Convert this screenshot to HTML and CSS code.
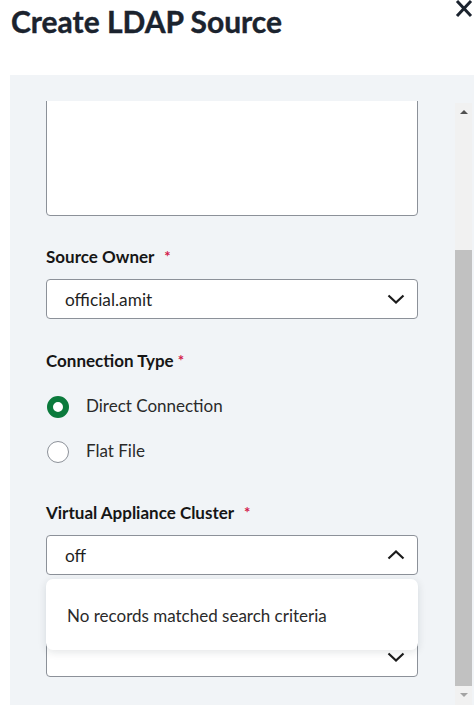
FILE: index.html
```html
<!DOCTYPE html>
<html lang="en">
<head>
<meta charset="utf-8">
<title>Create LDAP Source</title>
<link rel="stylesheet" href="styles.css">
</head>
<body>
<div class="page">
  <header class="head">
    <h1 class="title">Create LDAP Source</h1>
    <button class="close" aria-label="Close">
      <svg viewBox="0 0 18 18" width="18" height="18"><path d="M2 1 L16 16 M16 1 L2 16" stroke="#1b232e" stroke-width="3" stroke-linecap="butt" fill="none"/></svg>
    </button>
  </header>
  <div class="panel">
    <div class="scroll">
      <div class="content">
        <div class="textarea"></div>

        <div class="field field-first">
          <div class="label">Source Owner <span class="req req-gap">*</span></div>
          <div class="select">
            <span class="value">official.amit</span>
            <svg class="chev" viewBox="0 0 18 10" width="18" height="10"><path d="M1.5 1.5 L9 8.5 L16.5 1.5" stroke="#1b1b1b" stroke-width="2.2" fill="none"/></svg>
          </div>
        </div>

        <div class="field">
          <div class="label">Connection Type<span class="req">*</span></div>
          <div class="radios">
            <div class="radio-row"><span class="radio radio-on"></span><span class="radio-text">Direct Connection</span></div>
            <div class="radio-row"><span class="radio"></span><span class="radio-text">Flat File</span></div>
          </div>
        </div>

        <div class="field field-open">
          <div class="label">Virtual Appliance Cluster <span class="req req-gap">*</span></div>
          <div class="select">
            <span class="value">off</span>
            <svg class="chev" viewBox="0 0 18 10" width="18" height="10"><path d="M1.5 8.5 L9 1.5 L16.5 8.5" stroke="#1b1b1b" stroke-width="2.2" fill="none"/></svg>
          </div>
          <div class="popup">No records matched search criteria</div>
        </div>

        <div class="field field-last">
          <div class="select">
            <span class="value"></span>
            <svg class="chev" viewBox="0 0 18 10" width="18" height="10"><path d="M1.5 1.5 L9 8.5 L16.5 1.5" stroke="#1b1b1b" stroke-width="2.2" fill="none"/></svg>
          </div>
        </div>
      </div>
      <div class="scrollbar">
        <div class="sb-btn"><span class="tri tri-up"></span></div>
        <div class="sb-space"></div>
        <div class="sb-thumb"></div>
        <div class="sb-btn"><span class="tri tri-down"></span></div>
      </div>
    </div>
  </div>
</div>
</body>
</html>
```

FILE: styles.css
```css
html, body {
  margin: 0;
  padding: 0;
  background: #ffffff;
  overflow: hidden;
}
body {
  font-family: "Lato", "Liberation Sans", sans-serif;
  color: #1f1f1f;
}
.page {
  width: 474px;
  height: 707px;
  overflow: hidden;
}
.head {
  height: 75px;
  display: flex;
  justify-content: space-between;
  align-items: flex-start;
  padding-left: 11px;
  box-sizing: border-box;
}
.title {
  margin: 0;
  font-size: 30px;
  line-height: 42px;
  font-weight: 700;
  color: #1b232e;
  letter-spacing: 0;
  -webkit-text-stroke: 0.4px #1b232e;
}
.close {
  border: 0;
  background: transparent;
  padding: 0;
  margin: 0 1px 0 0;
  width: 18px;
  height: 18px;
  display: flex;
}
.panel {
  margin-left: 10px;
  width: 464px;
  height: 630px;
  background: #f1f4f7;
  padding-top: 26px;
  box-sizing: border-box;
}
.scroll {
  display: flex;
  height: 604px;
}
.content {
  flex: 1;
  padding: 0 37px 0 36px;
  overflow: hidden;
}
.textarea {
  margin-top: -30px;
  height: 145px;
  background: #fff;
  border: 1px solid #8c9199;
  border-radius: 4px;
  box-sizing: border-box;
}
.field {
  margin-top: 29px;
  position: relative;
}
.field-first {
  margin-top: 28px;
}
.label {
  font-size: 17px;
  font-weight: 700;
  line-height: 24px;
  color: #161616;
}
.req {
  color: #d3184a;
  font-size: 15px;
  vertical-align: 1px;
  margin-left: 4px;
}
.req-gap {
  margin-left: 6px;
}
.select {
  margin-top: 10px;
  height: 40px;
  background: #fff;
  border: 1px solid #8c9199;
  border-radius: 4px;
  box-sizing: border-box;
  display: flex;
  align-items: center;
  justify-content: space-between;
  padding: 0 12px 0 18px;
}
.value {
  font-size: 17.3px;
  color: #1f1f1f;
}
.radios {
  margin-top: 22px;
  display: flex;
  flex-direction: column;
  gap: 21px;
}
.radio-row {
  display: flex;
  align-items: center;
  height: 24px;
}
.radio {
  width: 22px;
  height: 22px;
  border-radius: 50%;
  box-sizing: border-box;
  border: 1px solid #8c9199;
  background: #fff;
  margin-left: 1px;
}
.radio-on {
  border: 6px solid #0b7a3c;
}
.radio-text {
  margin-left: 17px;
  font-size: 17px;
  color: #2a2a2a;
  margin-top: -3px;
}
.field-open {
  margin-top: 36px;
  z-index: 2;
}
.popup {
  position: absolute;
  left: 0;
  right: 0;
  top: 79px;
  height: 71px;
  background: #fff;
  border-radius: 7px;
  box-shadow: 0 2px 8px rgba(20, 30, 45, 0.12);
  display: flex;
  align-items: center;
  padding-left: 21px;
  padding-top: 2px;
  box-sizing: border-box;
  font-size: 17px;
  color: #2a2a2a;
}
.field-last {
  margin-top: 62px;
}
.field-last .select {
  margin-top: 0;
}
.scrollbar {
  width: 17px;
  margin: 2px 2px 0 0;
  background: #f1f1f1;
  display: flex;
  flex-direction: column;
}
.sb-btn {
  height: 17px;
  display: flex;
  align-items: center;
  justify-content: center;
}
.sb-space {
  height: 130px;
}
.sb-thumb {
  height: 436px;
  background: #c1c1c1;
}
.tri {
  width: 0;
  height: 0;
  border-left: 4px solid transparent;
  border-right: 4px solid transparent;
}
.tri-up {
  border-bottom: 4px solid #505050;
}
.tri-down {
  border-top: 4px solid #a3a3a3;
}
```
